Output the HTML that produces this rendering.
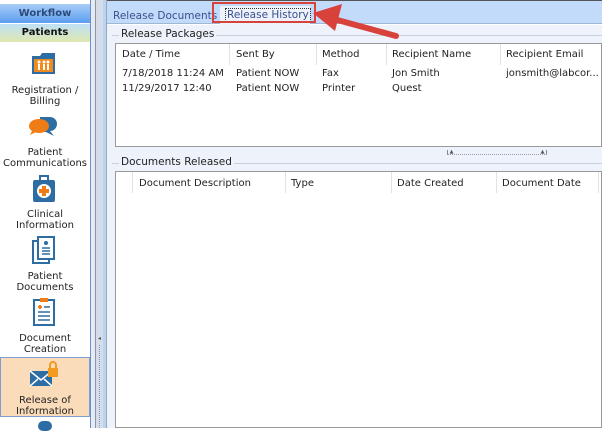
<!DOCTYPE html>
<html><head><style>
*{margin:0;padding:0;box-sizing:border-box}
body{width:602px;height:428px;overflow:hidden;background:#fff;font-family:"DejaVu Sans","Liberation Sans",sans-serif;font-size:10px;color:#222;position:relative}
.a{position:absolute}
.side{left:0;top:0;width:91px;height:428px;background:#fff;border-right:1px solid #6b8fcf}
.hd{left:0;width:90px;height:20px;text-align:center;font-weight:bold;font-size:10px;line-height:20px}
.it{left:0;width:90px;text-align:center;font-size:10px;line-height:11px;color:#222}
.cell{position:absolute;white-space:nowrap}
</style></head><body>
<div class="a side"></div>
<div class="a hd" style="top:4px;background:linear-gradient(#a9cdf7,#5b9df0);color:#2c4b7a;border-bottom:1px solid #fff">Workflow</div>
<div class="a hd" style="top:24px;height:18px;line-height:18px;background:linear-gradient(#bfe0f5,#dfe8b0);color:#111">Patients</div>
<svg class="a" style="left:30px;top:52px" width="28" height="24"><path d="M2 4h8l2-3h13v21H2z" fill="#2e6da4"/><rect x="4" y="7" width="19" height="13" fill="#f08a1c"/><g fill="#fff"><circle cx="9" cy="10" r="1.5"/><circle cx="14" cy="10" r="1.5"/><circle cx="18" cy="10" r="1.5"/><rect x="8" y="12" width="2" height="6"/><rect x="13" y="12" width="2" height="6"/><rect x="17" y="12" width="2" height="6"/></g></svg>
<div class="a it" style="top:85px">Registration /<br>Billing</div>
<svg class="a" style="left:28px;top:115px" width="30" height="22"><path d="M12 2h10a7 7 0 0 1 0 14l4 5-8-4h-6z" fill="#2e6da4"/><ellipse cx="11" cy="11" rx="10" ry="7" fill="#f07c16"/><path d="M4 16l-2 4 6-3z" fill="#f07c16"/></svg>
<div class="a it" style="top:147px">Patient<br>Communications</div>
<svg class="a" style="left:32px;top:174px" width="24" height="30"><path d="M8 6V2h8v4" fill="none" stroke="#2e6da4" stroke-width="2"/><rect x="1" y="6" width="22" height="22" rx="2" fill="#2e6da4"/><circle cx="12" cy="17" r="7" fill="#fff"/><path d="M10 12h4v3h3v4h-3v3h-4v-3h-3v-4h3z" fill="#f07c16"/></svg>
<div class="a it" style="top:209px">Clinical<br>Information</div>
<svg class="a" style="left:32px;top:236px" width="24" height="30"><rect x="1" y="5" width="16" height="22" fill="#fff" stroke="#2e6da4" stroke-width="2"/><rect x="6" y="1" width="16" height="22" fill="#fff" stroke="#2e6da4" stroke-width="2"/><circle cx="14" cy="7" r="2" fill="#2e6da4"/><path d="M10 12h8M10 15h8M10 18h8" stroke="#2e6da4" stroke-width="1.5"/></svg>
<div class="a it" style="top:271px">Patient<br>Documents</div>
<svg class="a" style="left:33px;top:297px" width="22" height="30"><rect x="1" y="3" width="20" height="25" fill="#fff" stroke="#2e6da4" stroke-width="2"/><rect x="7" y="1" width="8" height="4" fill="#f07c16"/><path d="M5 10h4M7 8v4" stroke="#f07c16" stroke-width="2"/><path d="M11 10h6M5 15h12M5 19h12M5 23h12" stroke="#2e6da4" stroke-width="1.5"/></svg>
<div class="a it" style="top:333px">Document<br>Creation</div>
<div class="a" style="left:0;top:357px;width:90px;height:60px;background:#fbdcba;border:1px solid #7a9fd0"></div>
<svg class="a" style="left:29px;top:361px" width="32" height="28"><rect x="1" y="10" width="22" height="15" fill="#2e6da4"/><path d="M1 10l11 9 11-9M1 25l8-7M23 25l-8-7" fill="none" stroke="#fff" stroke-width="1.5"/><path d="M21 7V4a3 3 0 0 1 6 0v3" fill="none" stroke="#f29a22" stroke-width="2"/><rect x="19" y="7" width="10" height="9" fill="#f29a22"/></svg>
<div class="a it" style="top:395px">Release of<br>Information</div>
<div class="a" style="left:38px;top:421px;width:14px;height:10px;border-radius:7px;background:#2e6da4"></div>
<div class="a" style="left:91px;top:0;width:17px;height:428px;background:#e6ebf3"></div>
<div class="a" style="left:95px;top:0;width:1px;height:428px;background:#8a96a8"></div>
<div class="a" style="left:96px;top:0;width:7px;height:428px;background:#d6dde8"></div>
<div class="a" style="left:103px;top:0;width:3px;height:428px;background:#b9d3f5"></div>
<div class="a" style="left:106px;top:0;width:1px;height:428px;background:#9aa"></div>
<div class="a" style="left:98px;top:335px;font-size:6px;color:#555">◂</div>
<div class="a" style="left:99px;top:345px;width:2px;height:83px;border-left:1px dotted #8899aa"></div>
<div class="a" style="left:107px;top:0;width:495px;height:1px;background:#555"></div>
<div class="a" style="left:107px;top:1px;width:495px;height:23px;background:#c2dbfb;border-bottom:1px solid #9fb6d6"></div>
<div class="a" style="left:113px;top:10px;color:#3a4f8c;font-size:10.5px">Release Documents</div>
<div class="a" style="left:220px;top:6px;width:90px;height:20px;background:#eef2fb"></div>
<div class="a" style="left:225px;top:8px;border:1px dotted #333;padding:0 1px;color:#3a4f8c;font-size:10.5px">Release History</div>
<div class="a" style="left:212px;top:2px;width:104px;height:21px;border:2px solid #d9423a"></div>
<div class="a" style="left:107px;top:25px;width:495px;height:403px;background:#eef2fb"></div>
<div class="a" style="left:112px;top:35px;width:490px;height:1px;background:#c9d0dc"></div>
<div class="a" style="left:119px;top:28px;background:#eef2fb;padding:0 2px;font-size:10.5px">Release Packages</div>
<div class="a" style="left:115px;top:43px;width:487px;height:104px;background:#fff;border:1px solid #999"></div>
<div class="cell" style="left:122px;top:49px">Date / Time</div>
<div class="cell" style="left:236px;top:49px">Sent By</div>
<div class="cell" style="left:322px;top:49px">Method</div>
<div class="cell" style="left:392px;top:49px">Recipient Name</div>
<div class="cell" style="left:506px;top:49px">Recipient Email</div>
<div class="a" style="left:229px;top:44px;width:1px;height:21px;background:#e2e2e2"></div>
<div class="a" style="left:316px;top:44px;width:1px;height:21px;background:#e2e2e2"></div>
<div class="a" style="left:386px;top:44px;width:1px;height:21px;background:#e2e2e2"></div>
<div class="a" style="left:500px;top:44px;width:1px;height:21px;background:#e2e2e2"></div>
<div class="cell" style="left:122px;top:68px">7/18/2018 11:24 AM</div>
<div class="cell" style="left:236px;top:68px">Patient NOW</div>
<div class="cell" style="left:322px;top:68px">Fax</div>
<div class="cell" style="left:392px;top:68px">Jon Smith</div>
<div class="cell" style="left:506px;top:68px">jonsmith@labcor...</div>
<div class="cell" style="left:122px;top:83px">11/29/2017 12:40</div>
<div class="cell" style="left:236px;top:83px">Patient NOW</div>
<div class="cell" style="left:322px;top:83px">Printer</div>
<div class="cell" style="left:392px;top:83px">Quest</div>
<div class="a" style="left:447px;top:150px;width:100px;height:5px;border-left:1px solid #888;border-right:1px solid #888;border-bottom:1px dotted #99a;font-size:5px;color:#555;line-height:5px">&nbsp;▲<span style="float:right">▲&nbsp;</span></div>
<div class="a" style="left:112px;top:163px;width:490px;height:1px;background:#c9d0dc"></div>
<div class="a" style="left:119px;top:156px;background:#eef2fb;padding:0 2px;font-size:10.5px">Documents Released</div>
<div class="a" style="left:115px;top:171px;width:487px;height:257px;background:#fff;border:1px solid #999"></div>
<div class="a" style="left:132px;top:172px;width:1px;height:21px;background:#e2e2e2"></div>
<div class="a" style="left:285px;top:172px;width:1px;height:21px;background:#e2e2e2"></div>
<div class="a" style="left:391px;top:172px;width:1px;height:21px;background:#e2e2e2"></div>
<div class="a" style="left:496px;top:172px;width:1px;height:21px;background:#e2e2e2"></div>
<div class="a" style="left:598px;top:172px;width:1px;height:21px;background:#e2e2e2"></div>
<div class="cell" style="left:139px;top:178px">Document Description</div>
<div class="cell" style="left:291px;top:178px">Type</div>
<div class="cell" style="left:397px;top:178px">Date Created</div>
<div class="cell" style="left:502px;top:178px">Document Date</div>
<svg class="a" style="left:300px;top:0" width="120" height="50"><path d="M30 18L96 36" stroke="#d9423a" stroke-width="6" stroke-linecap="round"/><path d="M13 13L42 4L35 31z" fill="#d9423a"/></svg>
</body></html>
